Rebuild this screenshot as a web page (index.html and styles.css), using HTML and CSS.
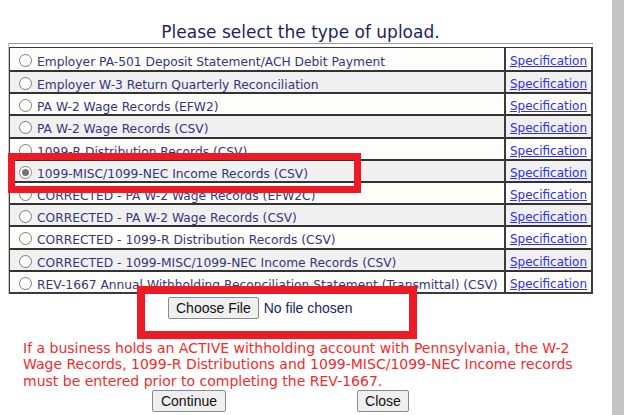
FILE: index.html
```html
<!DOCTYPE html>
<html>
<head>
<meta charset="utf-8">
<link rel="stylesheet" href="styles.css">
</head>
<body>
<div class="window">
  <main class="page">
    <h1 class="title">Please select the type of upload.</h1>
    <div class="grid-wrap">
      <table class="grid">
        <tr class="odd"><td class="opt"><span class="radio"></span>Employer PA-501 Deposit Statement/ACH Debit Payment</td><td class="spec"><a href="#">Specification</a></td></tr>
        <tr class="even"><td class="opt"><span class="radio"></span>Employer W-3 Return Quarterly Reconciliation</td><td class="spec"><a href="#">Specification</a></td></tr>
        <tr class="odd"><td class="opt"><span class="radio"></span>PA W-2 Wage Records (EFW2)</td><td class="spec"><a href="#">Specification</a></td></tr>
        <tr class="even"><td class="opt"><span class="radio"></span>PA W-2 Wage Records (CSV)</td><td class="spec"><a href="#">Specification</a></td></tr>
        <tr class="odd"><td class="opt"><span class="radio"></span>1099-R Distribution Records (CSV)</td><td class="spec"><a href="#">Specification</a></td></tr>
        <tr class="even"><td class="opt"><span class="radio checked"></span>1099-MISC/1099-NEC Income Records (CSV)</td><td class="spec"><a href="#">Specification</a></td></tr>
        <tr class="odd"><td class="opt"><span class="radio"></span>CORRECTED - PA W-2 Wage Records (EFW2C)</td><td class="spec"><a href="#">Specification</a></td></tr>
        <tr class="even"><td class="opt"><span class="radio"></span>CORRECTED - PA W-2 Wage Records (CSV)</td><td class="spec"><a href="#">Specification</a></td></tr>
        <tr class="odd"><td class="opt"><span class="radio"></span>CORRECTED - 1099-R Distribution Records (CSV)</td><td class="spec"><a href="#">Specification</a></td></tr>
        <tr class="even"><td class="opt"><span class="radio"></span>CORRECTED - 1099-MISC/1099-NEC Income Records (CSV)</td><td class="spec"><a href="#">Specification</a></td></tr>
        <tr class="odd"><td class="opt"><span class="radio"></span>REV-1667 Annual Withholding Reconciliation Statement (Transmittal) (CSV)</td><td class="spec"><a href="#">Specification</a></td></tr>
      </table>
    </div>
    <div class="file-row">
      <button class="btn" type="button">Choose File</button><span class="file-status">No file chosen</span>
    </div>
    <p class="warning">If a business holds an ACTIVE withholding account with Pennsylvania, the W-2<br>Wage Records, 1099-R Distributions and 1099-MISC/1099-NEC Income records<br>must be entered prior to completing the REV-1667.</p>
    <div class="actions">
      <button class="btn" type="button">Continue</button>
      <button class="btn" type="button">Close</button>
    </div>
    <div class="mark mark-radio"></div>
    <div class="mark mark-file"></div>
  </main>
  <div class="gutter"></div>
  <div class="scrollbar"></div>
</div>
</body>
</html>
```

FILE: styles.css
```css
html, body {
  margin: 0;
  padding: 0;
  background: #ffffff;
  overflow: hidden;
}

.window {
  display: flex;
  width: 624px;
  height: 415px;
}

.page {
  position: relative;
  width: 601px;
  font-family: "DejaVu Sans", Verdana, sans-serif;
}

.gutter {
  width: 11px;
}

.scrollbar {
  width: 12px;
  background: #c4c4c4;
}

.title {
  margin: 22px 0 1px;
  font-size: 17px;
  line-height: 20px;
  font-weight: normal;
  text-align: center;
  color: #1e1e5e;
}

.grid-wrap {
  margin-left: 8px;
  width: 584px;
  border-top: 1px solid #9a9a9a;
  border-left: 1px solid #c8c8c8;
  padding-top: 3px;
}

.grid {
  width: 100%;
  border-collapse: separate;
  border-spacing: 0;
  border-top: 1px solid #3a3a3a;
  border-left: 1px solid #3a3a3a;
  border-right: 2px solid #3a3a3a;
  border-bottom: 2px solid #3a3a3a;
  font-size: 12px;
  line-height: 14px;
}

.grid td {
  box-sizing: border-box;
  height: 22.2px;
  padding: 5px 4px 0;
  border-top: 2px solid #333333;
  white-space: nowrap;
  vertical-align: top;
}

.grid tr:first-child td {
  height: 22px;
  border-top: 0;
  padding-top: 6px;
}

.odd td {
  background: #fdfdfa;
}

.even td {
  background: #f0f0f0;
}

.opt {
  color: #35357d;
  font-size: 12.25px;
  padding-left: 8px !important;
}

.spec {
  width: 77px;
  border-left: 2px solid #3c3c3c;
  padding-left: 4px !important;
}

.spec a {
  color: #2f2ff0;
  text-decoration: underline;
}

.radio {
  display: inline-block;
  box-sizing: border-box;
  width: 13px;
  height: 13px;
  margin: 0 5px 0 1px;
  border: 1px solid #7c7c7c;
  border-radius: 50%;
  background: #ffffff;
  vertical-align: -1px;
  position: relative;
}

.radio.checked {
  border-color: #858585;
}

.radio.checked::after {
  content: "";
  position: absolute;
  left: 2px;
  top: 2px;
  width: 7px;
  height: 7px;
  border-radius: 50%;
  background: #737373;
}

.btn {
  box-sizing: border-box;
  height: 22px;
  padding: 1px 7px;
  font-family: "Liberation Sans", Arial, sans-serif;
  font-size: 14px;
  color: #111111;
  background: #efefef;
  border: 1px solid #8a8a8a;
  border-radius: 2px;
}

.file-row {
  display: flex;
  align-items: center;
  margin-top: 3px;
  padding-left: 168px;
  height: 22px;
}

.file-status {
  margin-left: 5px;
  font-family: "Liberation Sans", Arial, sans-serif;
  font-size: 14px;
  color: #1e1e5e;
}

.warning {
  margin: 21px 0 0;
  padding-left: 23px;
  font-size: 14px;
  line-height: 16.5px;
  color: #f52a2a;
  white-space: nowrap;
}

.actions {
  display: flex;
  gap: 131px;
  margin-top: 1px;
  padding-left: 152px;
}

.actions .btn:first-child {
  width: 74px;
}

.actions .btn:last-child {
  width: 52px;
}

.mark {
  position: absolute;
  border: 7px solid #ed1c24;
  box-sizing: border-box;
}

.mark-radio {
  left: 8px;
  top: 153px;
  width: 353px;
  height: 40px;
}

.mark-file {
  left: 137px;
  top: 286px;
  width: 280px;
  height: 53px;
  border-width: 8px;
}
```
